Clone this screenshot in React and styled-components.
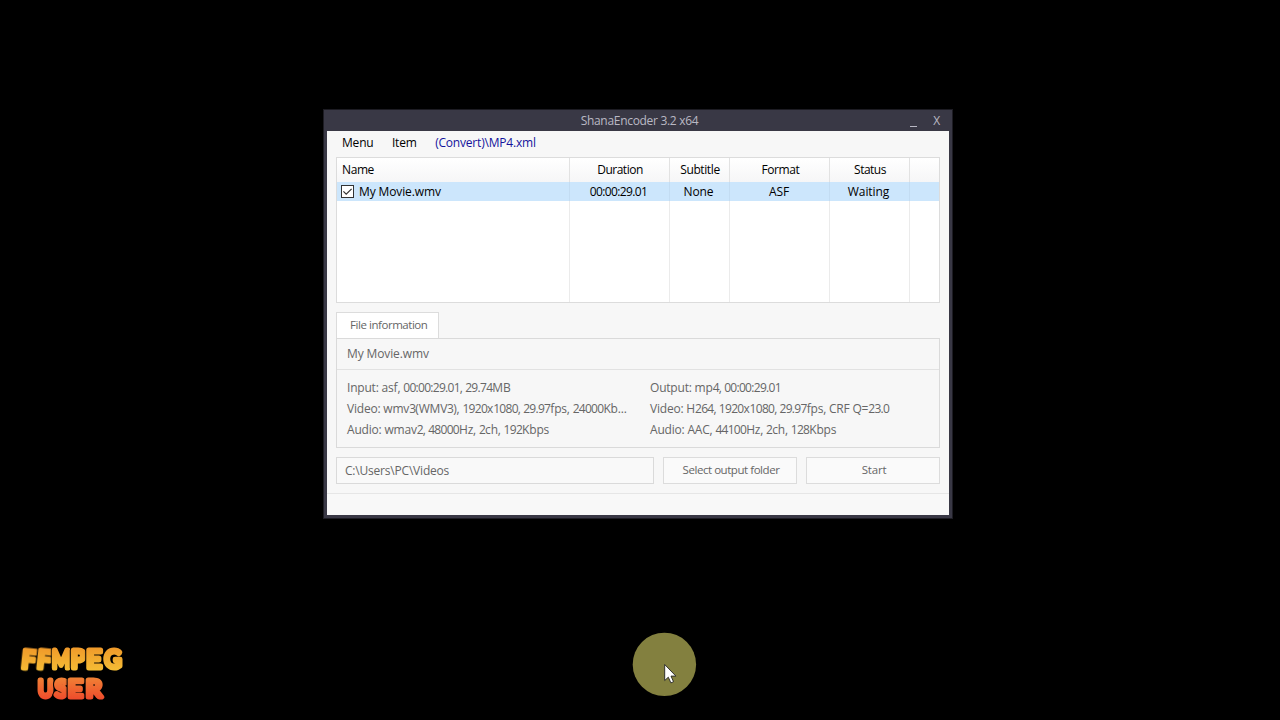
import React from 'react';
import styled, { createGlobalStyle } from 'styled-components';

const Global = createGlobalStyle`
  * { box-sizing: border-box; }
  body { margin: 0; background: #000; overflow: hidden; }
`;

const Desktop = styled.main`
  position: relative;
  width: 1280px;
  height: 720px;
  overflow: hidden;
  background: #000;
  font: 12px/16px "Open Sans", "Noto Sans", sans-serif;
  color: #000;
`;

const Window = styled.section`
  position: absolute;
  left: 323px;
  top: 109px;
  width: 630px;
  height: 410px;
  display: flex;
  flex-direction: column;
  padding: 0 3px 3px;
  background: #393845;
  border: 1px solid #1d1c23;
`;

const Label = styled.span`
  display: inline-block;
  white-space: pre;
  letter-spacing: ${(p) => p.$ls ?? -0.2}px;
  margin-left: ${(p) => p.$shift ?? 0}px;
`;

const Digits = styled.span`
  letter-spacing: -0.7px;
`;

const TitleBar = styled.header`
  flex: none;
  display: grid;
  grid-template-columns: 1fr auto 1fr;
  align-items: center;
  height: 21px;
  padding: 1px 9px 0 5px;
  color: #b9b8c4;
`;

const WindowButtons = styled.div`
  display: flex;
  justify-content: flex-end;
  align-items: center;
  gap: 16px;
`;

const Minimize = styled.i`
  width: 7px;
  height: 1px;
  margin-top: 10px;
  background: #b9b8c4;
`;

const Client = styled.div`
  width: 622px;
  flex: 1;
  display: flex;
  flex-direction: column;
  background: #f7f7f7;
`;

const MenuBar = styled.nav`
  display: flex;
  gap: 19px;
  height: 26px;
  padding: 4px 0 0 15px;
`;

const Link = styled(Label)`
  color: #14149c;
`;

const Table = styled.div`
  width: 604px;
  height: 146px;
  margin-left: 9px;
  display: flex;
  flex-direction: column;
  border: 1px solid #dcdcdc;
  background: #fff;
`;

const Row = styled.div`
  display: grid;
  grid-template-columns: 233px 100px 60px 100px 80px 1fr;
  height: ${(p) => p.$h}px;
  background: ${(p) => p.$bg || '#fff'};
`;

const Cell = styled.div`
  display: flex;
  align-items: center;
  justify-content: ${(p) => (p.$left ? 'flex-start' : 'center')};
  gap: 5px;
  padding-left: ${(p) => p.$pad ?? 0}px;
  border-right: 1px solid ${(p) => p.$line || 'transparent'};
  &:last-child { border-right: 0; }
`;

const Tab = styled.div`
  width: 103px;
  height: 26px;
  margin: 9px 0 0 9px;
  padding: 4px 0 0 13px;
  border: 1px solid #dcdcdc;
  border-bottom: 0;
  background: #fff;
  color: #666;
  font-size: 11.5px;
`;

const Panel = styled.section`
  width: 604px;
  height: 110px;
  margin-left: 9px;
  border: 1px solid #dadada;
  color: #666;
`;

const FileName = styled.div`
  height: 31px;
  padding: 7px 10px 0;
  border-bottom: 1px solid #e2e2e2;
`;

const Details = styled.div`
  display: grid;
  grid-template-columns: 303px 1fr;
  grid-auto-rows: 21px;
  padding: 7px 0 0 10px;
  line-height: 21px;
`;

const Actions = styled.div`
  display: grid;
  grid-template-columns: 318px 134px 134px;
  grid-template-rows: 27px;
  gap: 9px;
  height: 27px;
  margin: 9px 0 0 9px;
  color: #666;
`;

const PathField = styled.div`
  padding: 5px 8px;
  border: 1px solid #dadada;
  background: #f9f9f9;
`;

const Button = styled.button`
  padding: 0 0 2px;
  border: 1px solid #dcdcdc;
  background: #fafafa;
  color: #666;
  font: 11.5px/16px "Open Sans", "Noto Sans", sans-serif;
`;

const StatusBar = styled.footer`
  flex: 1;
  margin-top: 9px;
  border-top: 1px solid #e6e6e6;
  background: #f8f8f8;
`;

const Logo = styled.svg`
  position: absolute;
  left: 10px;
  top: 636px;
`;

const Letter = styled.text`
  font: 400 ${(p) => p.$size}px Lato, sans-serif;
  fill: url(#${(p) => p.$ink});
  stroke: url(#${(p) => p.$ink});
  stroke-width: 5px;
  stroke-linejoin: round;
  filter: drop-shadow(-1px 0 0.3px #000);
`;

const Pointer = styled.svg`
  position: absolute;
  left: 630px;
  top: 630px;
`;

const HEADERS = [
  ['Duration', -0.5, 1], ['Subtitle', -0.4, 1], ['Format', -0.4, 2], ['Status', -0.5, 1],
];
const VALUES = [
  ['00:00:29.01', -0.6, -2], ['None', -0.1, -2], ['ASF', -0.2, -1], ['Waiting', -0.1, -2],
];
const DETAILS = [
  'Input: asf, 00:00:29.01, 29.74MB',
  'Output: mp4, 00:00:29.01',
  'Video: wmv3(WMV3), 1920x1080, 29.97fps, 24000Kb...',
  'Video: H264, 1920x1080, 29.97fps, CRF Q=23.0',
  'Audio: wmav2, 48000Hz, 2ch, 192Kbps',
  'Audio: AAC, 44100Hz, 2ch, 128Kbps',
];

// letter, x, horizontal stretch, tilt
const GOLD = [
  ['F', 11, 1, 6], ['F', 26.5, 1, 6], ['M', 42, 0.78, 0],
  ['P', 61, 0.95, 0], ['E', 76.5, 1.05, 0], ['G', 94.5, 0.93, 0],
];
const EMBER = [
  ['U', 28, 0.85, 0], ['S', 45, 0.95, 0], ['E', 58, 1.08, 0], ['R', 76, 1.05, 0],
];

function Detail({ text }) {
  return (
    <Label>
      {text.split(/(\d[\d.,:]*)/).map((part, i) => (i % 2 ? <Digits key={i}>{part}</Digits> : part))}
    </Label>
  );
}

function CheckBox() {
  return (
    <svg width="13" height="13" viewBox="0 0 13 13">
      <rect x=".5" y=".5" width="12" height="12" fill="#fff" stroke="#333" />
      <path d="M2.4 6.4 5.2 9.2 10.6 3.8" fill="none" stroke="#333" strokeWidth="1.2" />
    </svg>
  );
}

function Word({ letters, y, size, ink }) {
  return letters.map(([ch, x, sx, tilt], i) => (
    <Letter key={i} $size={size} $ink={ink} transform={`translate(${x} ${y}) rotate(${tilt}) scale(${sx} 1)`}>{ch}</Letter>
  ));
}

function Brand() {
  return (
    <Logo width="130" height="74">
      <defs>
        <linearGradient id="gold" gradientUnits="userSpaceOnUse" x1="0" y1="-20" x2="0" y2="3">
          <stop offset="0" stopColor="#f09a2a" />
          <stop offset="1" stopColor="#f5bd35" />
        </linearGradient>
        <linearGradient id="ember" gradientUnits="userSpaceOnUse" x1="0" y1="-20" x2="0" y2="3">
          <stop offset="0" stopColor="#f08335" />
          <stop offset="1" stopColor="#ef4a2c" />
        </linearGradient>
      </defs>
      <Word letters={GOLD} y={31.8} size={25} ink="gold" />
      <Word letters={EMBER} y={60.8} size={24} ink="ember" />
    </Logo>
  );
}

export default function App() {
  return (
    <Desktop>
      <Global />
      <Window>
        <TitleBar>
          <span />
          <Label $ls={-0.3} $shift={7}>ShanaEncoder 3.2 x64</Label>
          <WindowButtons><Minimize /><Label>X</Label></WindowButtons>
        </TitleBar>
        <Client>
          <MenuBar>
            <Label>Menu</Label>
            <Label $shift={-0.5}>Item</Label>
            <Link $shift={-0.5}>(Convert)\MP4.xml</Link>
          </MenuBar>
          <Table>
            <Row $h={24} $bg="linear-gradient(#fff, #f6f6f7)">
              <Cell $left $pad={5} $line="#e2e2e2"><Label $ls={-0.4}>Name</Label></Cell>
              {HEADERS.map(([t, ls, s]) => <Cell key={t} $line="#e2e2e2"><Label $ls={ls} $shift={s}>{t}</Label></Cell>)}
              <Cell />
            </Row>
            <Row $h={19} $bg="#cce6fc">
              <Cell $left $pad={4} $line="#c3dcf2"><CheckBox /><Label $ls={-0.12}>My Movie.wmv</Label></Cell>
              {VALUES.map(([t, ls, s]) => <Cell key={t} $line="#c3dcf2"><Label $ls={ls} $shift={s}>{t}</Label></Cell>)}
              <Cell />
            </Row>
            <Row $h={101}>
              {[0, 1, 2, 3, 4, 5].map((i) => <Cell key={i} $line="#ebebeb" />)}
            </Row>
          </Table>
          <Tab><Label $ls={-0.45}>File information</Label></Tab>
          <Panel>
            <FileName><Label $ls={-0.12}>My Movie.wmv</Label></FileName>
            <Details>{DETAILS.map((t) => <Detail key={t} text={t} />)}</Details>
          </Panel>
          <Actions>
            <PathField><Label>C:\Users\PC\Videos</Label></PathField>
            <Button><Label $ls={-0.45} $shift={2}>Select output folder</Label></Button>
            <Button><Label $shift={2}>Start</Label></Button>
          </Actions>
          <StatusBar />
        </Client>
      </Window>
      <Brand />
      <Pointer width="70" height="70">
        <circle cx="34.4" cy="34.4" r="31.7" fill="#83803f" />
        <path d="M34.7 34.5V50.5L38.3 47.2 40.9 52.9 43.5 51.7 41 46.1H45.9Z" fill="#fff" stroke="#222" strokeWidth=".9" />
      </Pointer>
    </Desktop>
  );
}
